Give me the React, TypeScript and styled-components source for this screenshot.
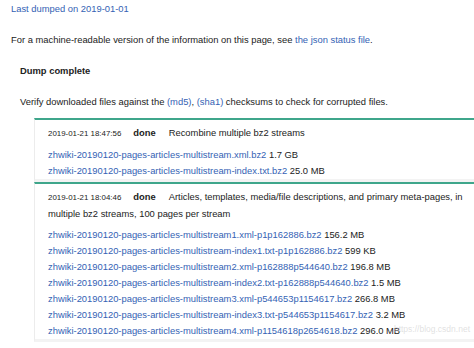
import React from "react";
import styled, { createGlobalStyle } from "styled-components";

const Global = createGlobalStyle`
  html, body { margin: 0; padding: 0; background: #fff; overflow: hidden; }
  body { font-family: "Liberation Sans", Arial, sans-serif; font-size: 9.4px; color: #222; }
`;

const Page = styled.div`
  position: relative;
  width: 474px;
  height: 348px;
  overflow: hidden;
  padding: 1px 0 0 11px;
  box-sizing: border-box;
  line-height: 16px;
`;

const Link = styled.a`
  color: #3462b4;
  text-decoration: none;
`;

const Para = styled.p<{ $indent?: number; $bottom?: number }>`
  margin: 0 0 ${(p) => p.$bottom ?? 15}px ${(p) => p.$indent ?? 0}px;
`;

const Heading = styled.h3`
  margin: 0 0 15px 9px;
  font-size: 9.4px;
  font-weight: bold;
  line-height: 16px;
`;

const DumpList = styled.ul`
  list-style: none;
  margin: 0 0 0 23px;
  padding: 0;
`;

const DumpItem = styled.li`
  border-top: 2px solid #3fa68b;
  border-left: 1px solid #ececec;
  border-bottom: 3px solid #f3f3f3;
  padding: 5px 4px 0 13px;
`;

const Meta = styled.div`
  margin-bottom: 5px;
`;

const Stamp = styled.span`
  font-size: 7.9px;
  margin-right: 12px;
`;

const Status = styled.span`
  font-weight: bold;
  margin-right: 13px;
`;

const Files = styled.ul`
  list-style: none;
  margin: 0;
  padding: 0;
`;

const FileRow = styled.li`
  white-space: nowrap;
`;

const Watermark = styled.div`
  position: absolute;
  right: 4px;
  top: 321px;
  font-size: 8.5px;
  color: rgba(200, 200, 200, 0.55);
  white-space: nowrap;
`;

type Dump = {
  stamp: string;
  desc: string;
  files: [string, string][];
};

const dumps: Dump[] = [
  {
    stamp: "2019-01-21 18:47:56",
    desc: "Recombine multiple bz2 streams",
    files: [
      ["zhwiki-20190120-pages-articles-multistream.xml.bz2", "1.7 GB"],
      ["zhwiki-20190120-pages-articles-multistream-index.txt.bz2", "25.0 MB"],
    ],
  },
  {
    stamp: "2019-01-21 18:04:46",
    desc:
      "Articles, templates, media/file descriptions, and primary meta-pages, in multiple bz2 streams, 100 pages per stream",
    files: [
      ["zhwiki-20190120-pages-articles-multistream1.xml-p1p162886.bz2", "156.2 MB"],
      ["zhwiki-20190120-pages-articles-multistream-index1.txt-p1p162886.bz2", "599 KB"],
      ["zhwiki-20190120-pages-articles-multistream2.xml-p162888p544640.bz2", "196.8 MB"],
      ["zhwiki-20190120-pages-articles-multistream-index2.txt-p162888p544640.bz2", "1.5 MB"],
      ["zhwiki-20190120-pages-articles-multistream3.xml-p544653p1154617.bz2", "266.8 MB"],
      ["zhwiki-20190120-pages-articles-multistream-index3.txt-p544653p1154617.bz2", "3.2 MB"],
      ["zhwiki-20190120-pages-articles-multistream4.xml-p1154618p2654618.bz2", "296.0 MB"],
    ],
  },
];

export default function App() {
  return (
    <>
      <Global />
      <Page>
        <Para>
          <Link href="#">Last dumped on 2019-01-01</Link>
        </Para>
        <Para>
          For a machine-readable version of the information on this page, see{" "}
          <Link href="#">the json status file</Link>.
        </Para>
        <Heading>Dump complete</Heading>
        <Para $indent={9} $bottom={8}>
          Verify downloaded files against the <Link href="#">(md5)</Link>,{" "}
          <Link href="#">(sha1)</Link> checksums to check for corrupted files.
        </Para>
        <DumpList>
          {dumps.map((d) => (
            <DumpItem key={d.stamp}>
              <Meta>
                <Stamp>{d.stamp}</Stamp>
                <Status>done</Status>
                {d.desc}
              </Meta>
              <Files>
                {d.files.map(([name, size]) => (
                  <FileRow key={name}>
                    <Link href="#">{name}</Link> {size}
                  </FileRow>
                ))}
              </Files>
            </DumpItem>
          ))}
        </DumpList>
        <Watermark>https://blog.csdn.net</Watermark>
      </Page>
    </>
  );
}
